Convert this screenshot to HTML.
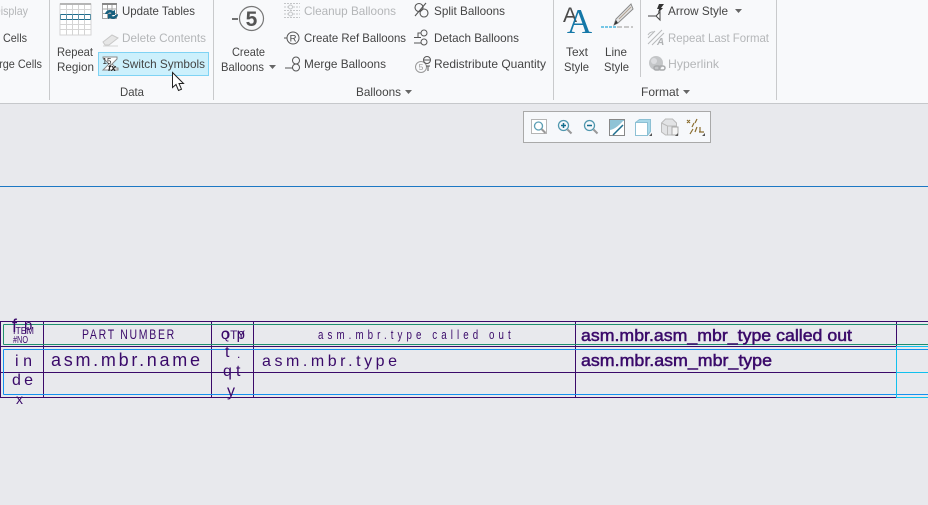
<!DOCTYPE html>
<html><head><meta charset="utf-8"><style>
html,body{margin:0;padding:0;background:#e8e9ed;overflow:hidden}
svg{display:block}
text{font-family:"Liberation Sans",sans-serif}
.r{font-size:12px;fill:#444}
.g{font-size:12px;fill:#b4b6b8}
.m{text-anchor:middle}
.e{text-anchor:end}
.c{fill:#3a0a6a}
.b{fill:#3a0a6a;stroke:#3a0a6a;stroke-width:.5;font-size:17px}
</style></head><body>
<svg width="928" height="505" viewBox="0 0 928 505" xmlns="http://www.w3.org/2000/svg">
<rect width="928" height="505" fill="#e8e9ed"/>
<rect width="928" height="103" fill="#f8f9fb"/>
<rect y="103" width="928" height="1" fill="#c6c8cb"/>
<g fill="#c9cacc">
<rect x="49" width="1" height="100"/><rect x="213" width="1" height="100"/>
<rect x="553" width="1" height="100"/><rect x="776" width="1" height="100"/>
<rect x="640" width="1" height="77"/>
</g>
<rect x="98.500" y="52.500" width="110" height="23" fill="#ccf0fc" stroke="#7fd3f4"/>

<text class="g" x="-7" y="15" textLength="35" lengthAdjust="spacingAndGlyphs">Display</text>
<text class="r" x="3" y="42" textLength="24" lengthAdjust="spacingAndGlyphs">Cells</text>
<text class="r" x="-16" y="68" textLength="58" lengthAdjust="spacingAndGlyphs">Merge Cells</text>

<text class="r" x="57" y="56" textLength="36" lengthAdjust="spacingAndGlyphs">Repeat</text>
<text class="r" x="57" y="71" textLength="37" lengthAdjust="spacingAndGlyphs">Region</text>
<text class="r" x="122" y="15" textLength="73" lengthAdjust="spacingAndGlyphs">Update Tables</text>
<text class="g" x="122" y="42" textLength="84" lengthAdjust="spacingAndGlyphs">Delete Contents</text>
<text class="r" x="122" y="68" textLength="83" lengthAdjust="spacingAndGlyphs">Switch Symbols</text>
<text class="r" x="120" y="96" textLength="24" lengthAdjust="spacingAndGlyphs">Data</text>

<text class="r" x="232" y="56" textLength="33" lengthAdjust="spacingAndGlyphs">Create</text>
<text class="r" x="221" y="71" textLength="43" lengthAdjust="spacingAndGlyphs">Balloons</text>
<text class="g" x="304" y="15" textLength="92" lengthAdjust="spacingAndGlyphs">Cleanup Balloons</text>
<text class="r" x="304" y="42" textLength="102" lengthAdjust="spacingAndGlyphs">Create Ref Balloons</text>
<text class="r" x="304" y="68" textLength="82" lengthAdjust="spacingAndGlyphs">Merge Balloons</text>
<text class="r" x="434" y="15" textLength="71" lengthAdjust="spacingAndGlyphs">Split Balloons</text>
<text class="r" x="434" y="42" textLength="85" lengthAdjust="spacingAndGlyphs">Detach Balloons</text>
<text class="r" x="434" y="68" textLength="112" lengthAdjust="spacingAndGlyphs">Redistribute Quantity</text>
<text class="r" x="356" y="96" textLength="45" lengthAdjust="spacingAndGlyphs">Balloons</text>

<text class="r" x="566" y="56" textLength="22" lengthAdjust="spacingAndGlyphs">Text</text>
<text class="r" x="564" y="71" textLength="25" lengthAdjust="spacingAndGlyphs">Style</text>
<text class="r" x="605" y="56" textLength="22" lengthAdjust="spacingAndGlyphs">Line</text>
<text class="r" x="604" y="71" textLength="25" lengthAdjust="spacingAndGlyphs">Style</text>
<text class="r" x="668" y="15" textLength="60" lengthAdjust="spacingAndGlyphs">Arrow Style</text>
<text class="g" x="668" y="42" textLength="101" lengthAdjust="spacingAndGlyphs">Repeat Last Format</text>
<text class="g" x="668" y="68" textLength="51" lengthAdjust="spacingAndGlyphs">Hyperlink</text>
<text class="r" x="641" y="96" textLength="38" lengthAdjust="spacingAndGlyphs">Format</text>

<g fill="#666">
<path d="M269 65h7l-3.500 4z"/><path d="M405 90h7l-3.500 4z"/><path d="M683 90h7l-3.500 4z"/><path d="M735 9h7l-3.500 4z"/>
</g>

<!-- repeat region -->
<g fill="none" stroke="#d4d4d4">
<rect x="60" y="4" width="31" height="31" fill="#fff"/>
<path d="M66.500 4v31M72.500 4v31M78.500 4v31M84.500 4v31M60 9.500h31M60 24.500h31M60 29.500h31"/>
</g>
<rect x="60" y="3" width="31" height="2" fill="#b5b5b5"/>
<path d="M60.500 14.500h30M60.500 19.500h30" stroke="#1f6c8c" stroke-width="1" fill="none"/>
<path d="M60.500 14v6M66.500 14v6M72.500 14v6M78.500 14v6M84.500 14v6M90.500 14v6" stroke="#5f93a8" fill="none"/>

<!-- update tables -->
<g fill="none" stroke="#a5a5a5"><rect x="102.500" y="4.500" width="14" height="14" fill="#fff"/><path d="M107.500 4v14M112 4v14M102 9h15M102 13.500h15"/></g>
<rect x="102" y="3" width="15" height="2" fill="#888"/>
<path d="M105 14a5 5 0 0 1 8-3l2-1v5h-5l1.500-2a3 3 0 0 0-4 1zM118 14a5 5 0 0 1-8 4l-2 1v-5h5l-1.500 2a3 3 0 0 0 4-1z" fill="#17607f"/>

<!-- eraser -->
<path d="M103 42l9-7 6 3-9 7h-4z" fill="#e6e6e6" stroke="#c8c8c8"/>
<path d="M103 46h15" stroke="#d5d5d5"/>

<!-- switch symbols -->
<path d="M103 57h14v2l-5 5 4 4h2v2h-15l6-6-6-6z" fill="#fff" stroke="#888"/>
<text x="102.500" y="64" font-size="8" fill="#222">15</text>
<text x="108" y="71" font-size="9" font-weight="bold" fill="#222" font-style="italic">fx</text>

<!-- cursor -->
<path d="M172.500 72.500v15l3.500-3 2.500 6 3-1.300-2.500-5.700h4.500z" fill="#fff" stroke="#222" stroke-width="1"/>

<!-- create balloon -->
<circle cx="251.500" cy="18.500" r="12" fill="none" stroke="#777" stroke-width="1.200"/>
<path d="M232 19h6" stroke="#444" stroke-width="1.500"/>
<text x="251.500" y="26" font-size="21" font-weight="bold" fill="#555" text-anchor="middle">5</text>

<!-- cleanup -->
<g fill="none" stroke="#c4c6c8">
<circle cx="290.500" cy="7" r="2"/><circle cx="290.500" cy="14" r="2"/>
<path d="M284 7h4M293 7h7M284 14h4M293 14h7M284 3.500h16M284 10.500h16M284 17.500h16" stroke-dasharray="2 1"/>
</g>
<!-- create ref -->
<circle cx="293" cy="38" r="6" fill="none" stroke="#555"/><path d="M284 38h3" stroke="#555"/>
<text x="293" y="41.500" font-size="9.500" fill="#444" text-anchor="middle">R</text>
<!-- merge -->
<g fill="none" stroke="#555"><circle cx="296" cy="60.500" r="3.500"/><circle cx="296" cy="67.500" r="3.500"/><path d="M285 68h7.500"/></g>
<!-- split -->
<g fill="none" stroke="#555" stroke-width="1.100"><circle cx="419" cy="7.500" r="4"/><circle cx="424" cy="13" r="4"/><path d="M426 3l-11 13"/></g>
<!-- detach -->
<g fill="none" stroke="#555"><circle cx="424" cy="33" r="3"/><circle cx="424" cy="42" r="3"/><path d="M414 37.500h7M414 43h7M421 33h-3v4"/></g>
<!-- redistribute -->
<circle cx="421" cy="67" r="5.500" fill="none" stroke="#999"/>
<text x="421" y="70" font-size="8.500" fill="#999" text-anchor="middle">5</text>
<circle cx="427" cy="60" r="3.500" fill="none" stroke="#555"/><path d="M423.500 60h7M426 66h4M428 66v5" stroke="#555" fill="none"/>

<!-- text style -->
<text x="563" y="22" font-size="21" fill="#4a4a4a">A</text>
<text x="579.500" y="33" font-size="35" fill="#1578a8" text-anchor="middle" style='font-family:"Liberation Serif",serif'>A</text>

<!-- line style -->
<path d="M601 27h16" stroke="#27a8d8" stroke-dasharray="3 1" stroke-width="1.200"/>
<path d="M617 27h16" stroke="#aaa" stroke-dasharray="5 2" stroke-width="1.200"/>
<path d="M614 25l2-6 15-15 2 5-15 14z" fill="#e4e4e4" stroke="#8a8a8a"/>
<path d="M614 25l2-5 2 3z" fill="#333"/>
<path d="M619 19l12-12" stroke="#b0a090"/>

<!-- arrow style -->
<path d="M648 16h12" stroke="#444"/>
<path d="M656 16l4-4v8z" fill="#fff" stroke="#444"/>
<path d="M659 4h5l-3 4h2l-5 5 1-4h-2z" fill="#333"/>

<!-- repeat last format -->
<g fill="none" stroke="#b8babc">
<path d="M648 44l14-14M652 45l12-12M648 38l7-7"/><path d="M648 35a6 6 0 0 1 6-3"/>
</g>
<text x="657" y="45" font-size="10" font-style="italic" font-weight="bold" fill="#b0b2b4">A</text>
<!-- hyperlink -->
<circle cx="656" cy="63" r="7" fill="#c4c6c8"/><circle cx="654" cy="61" r="3" fill="#dcdde0"/>
<rect x="654" y="66" width="6" height="4" rx="2" fill="none" stroke="#a8aaac" stroke-width="1.500"/>
<rect x="659" y="66" width="6" height="4" rx="2" fill="none" stroke="#a8aaac" stroke-width="1.500"/>

<!-- floating toolbar -->
<rect x="523.500" y="111.500" width="187" height="31" fill="#f6f8fb" stroke="#a9a9a9"/>
<rect x="531.500" y="119.500" width="15" height="14" fill="#fff" stroke="#b5b5b5"/>
<g fill="none">
<circle cx="538.500" cy="126" r="4" stroke="#5d9fb5" stroke-width="1.300"/><path d="M541.500 129l4 4" stroke="#999" stroke-width="2"/>
<circle cx="563.500" cy="125.500" r="5" stroke="#4f97ae" stroke-width="1.300"/><path d="M567.500 129.500l4 4" stroke="#999" stroke-width="2"/>
<path d="M561 125.500h5M563.500 123v5" stroke="#136d8d" stroke-width="1.500"/>
<circle cx="589.500" cy="125.500" r="5" stroke="#4f97ae" stroke-width="1.300"/><path d="M593.500 129.500l4 4" stroke="#999" stroke-width="2"/>
<path d="M587 125.500h5" stroke="#136d8d" stroke-width="1.500"/>
</g>
<rect x="609.500" y="119.500" width="15" height="16" fill="#8fc3d6" stroke="#888"/>
<path d="M610 135v-5q6-1 13-9h1v14z" fill="#fff"/>
<path d="M613 135l10-10" stroke="#1f6f8f" stroke-width="1.500"/>
<path d="M635.500 122.500l4-3h11v12l-3 4h-12z" fill="#a9d8e8" stroke="#8cc0d4"/>
<rect x="635.500" y="122.500" width="12" height="13" fill="#fff" stroke="#8cc0d4"/>
<path d="M661.500 123l4-4h7l4 4v8l-4 4h-7l-4-3z" fill="#e2e3e5" stroke="#bbb"/>
<path d="M661.500 123l6 3h9M667.500 126v9" fill="none" stroke="#bbb"/>
<rect x="672" y="127" width="6" height="8" fill="#f4f4f4" stroke="#aaa"/>
<g stroke="#8a6d2f" fill="none" stroke-width="1.200">
<path d="M687 120l3 3M690 120l-3 3M697 119l-2 4M692 127l2-4M690 134l3-5M699 132h5M700 127v5M697 127l-2 5"/>
</g>
<g fill="#555"><path d="M652 136h-3l3-3zM678 136h-3l3-3zM705 136h-3l3-3z"/></g>

<!-- blue reference line -->
<rect y="186" width="928" height="1" fill="#1c78c4"/>

<!-- table -->
<g fill="none" stroke-width="1">
<path d="M0 321.500h928M0 346.500h897M0 372.500h897M0 397.500h897" stroke="#3a0a6a"/>
<path d="M.5 321v77M43.500 321v77M211.500 321v77M253.500 321v77M575.500 321v77M896.500 321v25" stroke="#3a0a6a"/>
<path d="M3.500 324.500h925M3.500 344.500h925M3.500 324.500v20" stroke="#1f8f6e"/>
<path d="M3.500 349.500h925M3.500 394.500h925M3.500 349.500v45" stroke="#1490ee"/>
<path d="M896.500 346v52M897 346.500h31M897 397.500h31M897 372.500h31" stroke="#10c0ee"/>
</g>

<g class="c">
<text class="c" x="12" y="332" font-size="18">f</text>
<text class="c" x="24" y="330" font-size="15">p</text>
<text class="c" x="13" y="334" font-size="10" textLength="21" lengthAdjust="spacingAndGlyphs">ITEM</text>
<text class="c" x="13" y="343" font-size="10" textLength="15" lengthAdjust="spacingAndGlyphs">#NO</text>
<text class="c" x="15" y="366" font-size="16" textLength="17">i n</text>
<text class="c" x="12" y="385" font-size="16" textLength="21">d e</text>
<text class="c" x="16" y="404" font-size="14">x</text>
<text class="c" font-size="14" transform="translate(82,339) scale(.75,1)" textLength="123">PART NUMBER</text>
<text class="c" x="51" y="366" font-size="18" textLength="149">asm.mbr.name</text>
<text class="c" x="221" y="339" font-size="12" textLength="24" lengthAdjust="spacingAndGlyphs">QTY</text>
<text class="c" x="221" y="339" font-size="15" textLength="24">o p</text>
<text class="c" x="225" y="357" font-size="16">t</text>
<text class="c" x="237" y="358" font-size="12">.</text>
<text class="c" x="223" y="376" font-size="16">q</text>
<text class="c" x="236" y="376" font-size="16">t</text>
<text class="c" x="227" y="396" font-size="16">y</text>
<text class="c" font-size="13" transform="translate(318,339) scale(.75,1)" textLength="257">asm.mbr.type called out</text>
<text class="c" x="262" y="366" font-size="16" textLength="135">asm.mbr.type</text>
</g>
<text class="b" x="581" y="341" textLength="271" lengthAdjust="spacingAndGlyphs">asm.mbr.asm_mbr_type called out</text>
<text class="b" x="581" y="366" textLength="191" lengthAdjust="spacingAndGlyphs">asm.mbr.asm_mbr_type</text>
</svg>
</body></html>
